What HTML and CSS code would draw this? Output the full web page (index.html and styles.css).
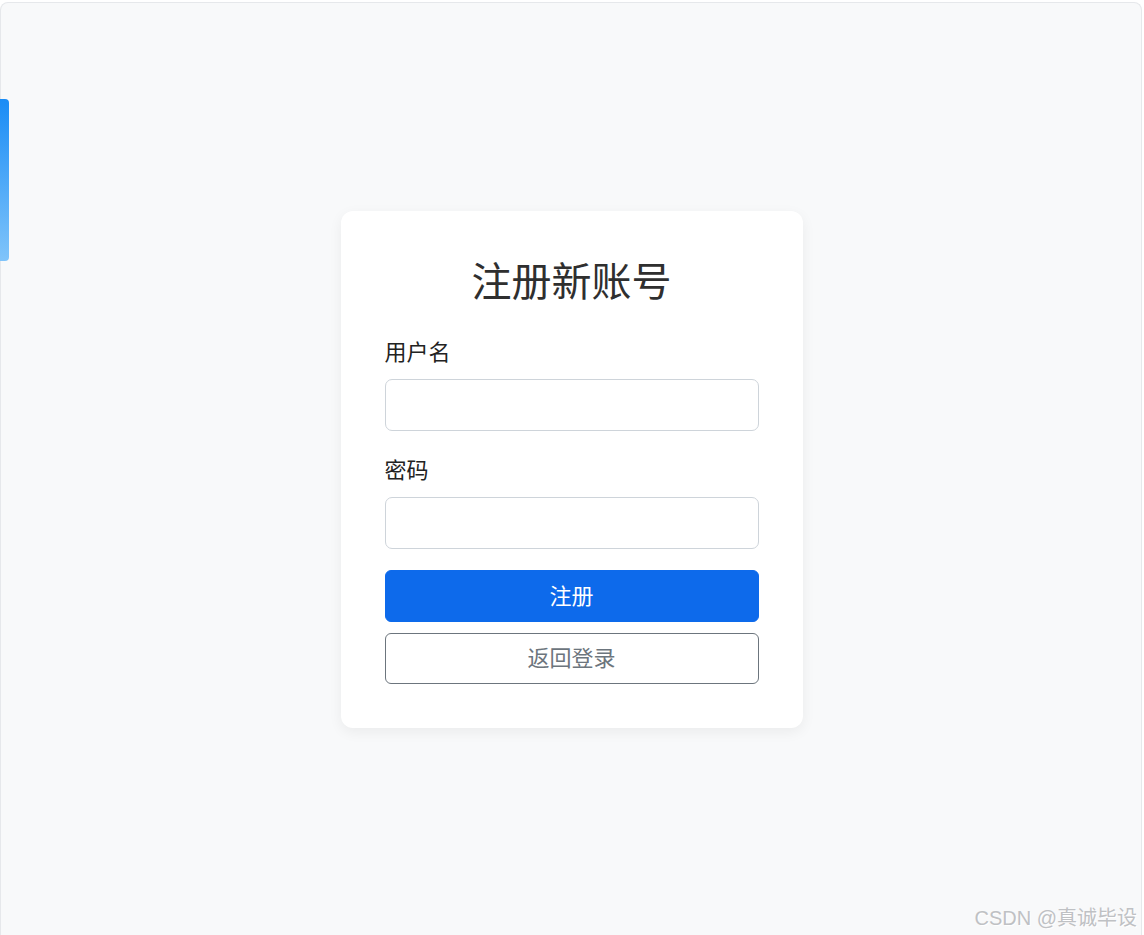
FILE: index.html
```html
<!DOCTYPE html>
<html lang="zh-CN">
<head>
<meta charset="utf-8">
<title>注册新账号</title>
<link rel="stylesheet" href="styles.css">
</head>
<body>
<div class="frame">
  <div class="side-tab"></div>
  <main class="stage">
    <form class="card">
      <h2 class="title">注册新账号</h2>
      <div class="field">
        <label class="label" for="u">用户名</label>
        <input class="input" id="u" type="text">
      </div>
      <div class="field">
        <label class="label" for="p">密码</label>
        <input class="input" id="p" type="password">
      </div>
      <button class="btn btn-primary" type="button">注册</button>
      <button class="btn btn-outline" type="button">返回登录</button>
    </form>
  </main>
  <div class="watermark">CSDN @真诚毕设</div>
</div>
</body>
</html>
```
FILE: styles.css
```css
* { box-sizing: border-box; }
html, body { margin: 0; padding: 0; height: 100%; }
body {
  background: #ffffff;
  font-family: "Noto Sans CJK SC", "Noto Sans", sans-serif;
  color: #333333;
  overflow: hidden;
}
.frame {
  position: relative;
  margin: 2px 2px 0 0;
  height: calc(100vh - 2px);
  background: #f8f9fa;
  border: 1px solid #e6e8eb;
  border-bottom: none;
  border-radius: 8px 8px 0 0;
}
.side-tab {
  position: absolute;
  left: -1px;
  top: 96px;
  width: 9px;
  height: 162px;
  border-radius: 0 4px 4px 0;
  background: linear-gradient(to bottom, #1a8cf5, #80c4fa);
}
.stage {
  height: 100%;
  display: flex;
  align-items: center;
  justify-content: center;
  padding-left: 1px;
}
.card {
  width: 462px;
  background: #ffffff;
  border-radius: 12px;
  box-shadow: 0 4px 14px rgba(0, 0, 0, 0.06);
  padding: 44px 44px 44px;
  display: flex;
  flex-direction: column;
}
.title {
  margin: 0 0 31px;
  font-size: 40px;
  font-weight: 400;
  line-height: 48px;
  text-align: center;
  color: #2f2f2f;
}
.field {
  display: flex;
  flex-direction: column;
  margin-bottom: 21px;
}
.label {
  font-size: 22px;
  line-height: 33px;
  margin-bottom: 12px;
  color: #222;
}
.input {
  height: 52px;
  border: 1px solid #ced4da;
  border-radius: 7px;
  background: #fff;
  font-size: 20px;
  padding: 0 14px;
}
.btn {
  height: 52px;
  border-radius: 6px;
  font-family: inherit;
  font-size: 22px;
  line-height: 1;
  padding: 0 0 4px;
  cursor: pointer;
}
.btn-primary {
  background: #0d6aeb;
  border: 1px solid #0d6aeb;
  color: #ffffff;
  margin-bottom: 11px;
}
.btn-outline {
  height: 51px;
  background: #ffffff;
  border: 1px solid #6c757d;
  color: #6c757d;
}
.watermark {
  position: absolute;
  right: 4px;
  bottom: 4px;
  font-family: "Liberation Sans", "Noto Sans CJK SC", sans-serif;
  font-size: 20px;
  color: #bfc1c4;
  text-shadow: 1px 1px 0 #ffffff;
}
```
